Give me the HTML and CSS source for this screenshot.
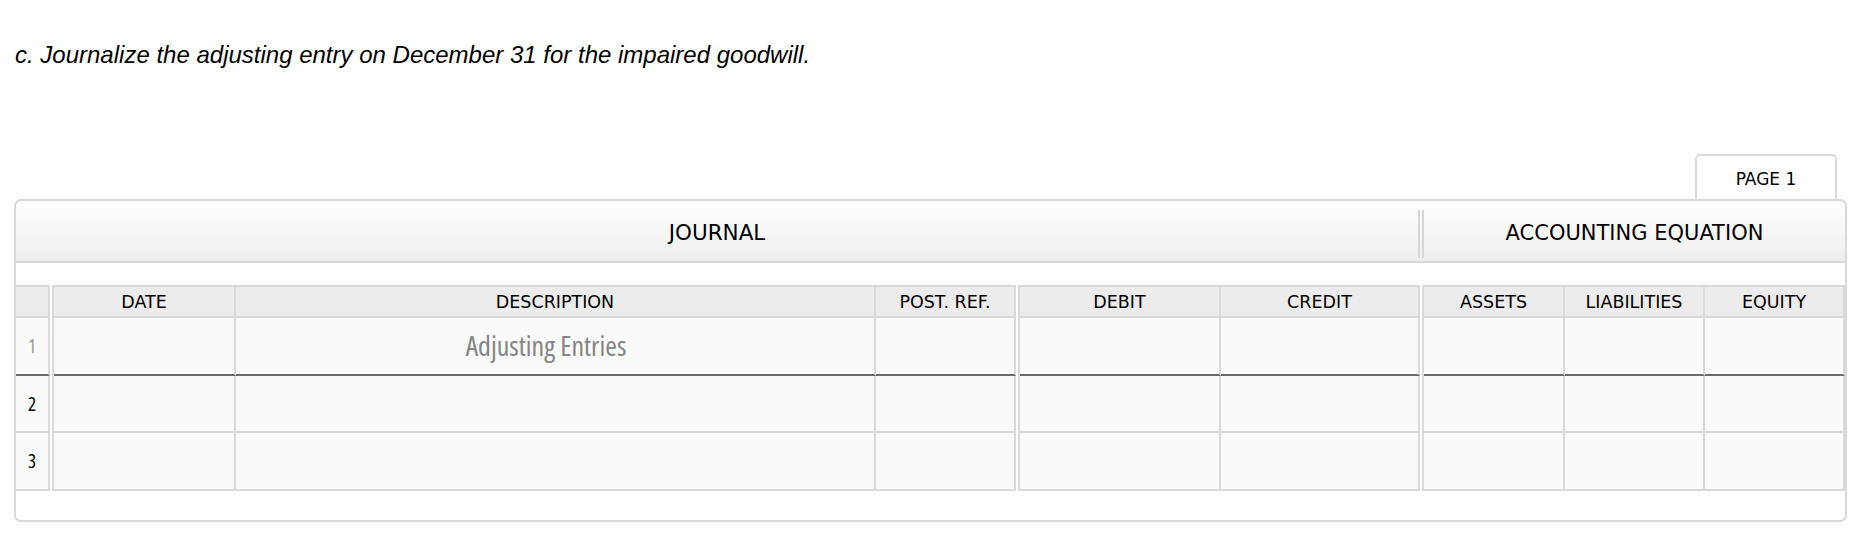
FILE: index.html
```html
<!DOCTYPE html>
<html>
<head>
<meta charset="utf-8">
<link rel="stylesheet" href="styles.css">
</head>
<body>
<p class="prompt">c. Journalize the adjusting entry on December 31 for the impaired goodwill.</p>
<div class="tabs"><div class="tab">PAGE 1</div></div>
<div class="sheet">
  <div class="band">
    <div class="band-journal">JOURNAL</div>
    <div class="band-divider"></div>
    <div class="band-equation">ACCOUNTING EQUATION</div>
  </div>
  <div class="tables">
    <div class="grp grp-num">
      <div class="hd"></div>
      <div class="cell num muted r1">1</div>
      <div class="cell num">2</div>
      <div class="cell num">3</div>
    </div>
    <div class="grp grp-main">
      <div class="hd">DATE</div><div class="hd">DESCRIPTION</div><div class="hd">POST. REF.</div>
      <div class="cell r1"></div><div class="cell r1 desc">Adjusting Entries</div><div class="cell r1"></div>
      <div class="cell"></div><div class="cell"></div><div class="cell"></div>
      <div class="cell"></div><div class="cell"></div><div class="cell"></div>
    </div>
    <div class="grp grp-amt">
      <div class="hd">DEBIT</div><div class="hd">CREDIT</div>
      <div class="cell r1"></div><div class="cell r1"></div>
      <div class="cell"></div><div class="cell"></div>
      <div class="cell"></div><div class="cell"></div>
    </div>
    <div class="grp grp-eq">
      <div class="hd">ASSETS</div><div class="hd">LIABILITIES</div><div class="hd">EQUITY</div>
      <div class="cell r1"></div><div class="cell r1"></div><div class="cell r1"></div>
      <div class="cell"></div><div class="cell"></div><div class="cell"></div>
      <div class="cell"></div><div class="cell"></div><div class="cell"></div>
    </div>
  </div>
</div>
</body>
</html>
```
FILE: styles.css
```css
html, body {
  margin: 0;
  padding: 0;
  background: #ffffff;
}
body {
  width: 1868px;
  font-family: "DejaVu Sans", sans-serif;
  color: #000;
}
.prompt {
  margin: 41px 0 0 15px;
  font-family: "Liberation Sans", Arial, sans-serif;
  font-style: italic;
  font-size: 24px;
  line-height: 27px;
  color: #000;
}
.tabs {
  display: flex;
  justify-content: flex-end;
  margin-top: 86px;
  padding-right: 31px;
}
.tab {
  width: 142px;
  height: 45px;
  box-sizing: border-box;
  border: 2px solid #d9d9d9;
  border-bottom: none;
  border-radius: 5px 5px 0 0;
  background: #fff;
  display: flex;
  align-items: center;
  justify-content: center;
  font-size: 17px;
  color: #000;
  padding-top: 2px;
}
.sheet {
  margin-left: 14px;
  width: 1833px;
  box-sizing: border-box;
  border: 2px solid #d9d9d9;
  border-radius: 7px;
  background: #fff;
  padding-bottom: 29px;
}
.band {
  display: flex;
  height: 62px;
  box-sizing: border-box;
  border-bottom: 2px solid #d9d9d9;
  background: linear-gradient(#ffffff, #eeeeee);
  border-radius: 6px 6px 0 0;
}
.band-journal,
.band-equation {
  display: flex;
  align-items: center;
  justify-content: center;
  font-size: 21px;
  padding-top: 3px;
  color: #000;
}
.band-journal { width: 1402px; font-size: 21.5px; }
.band-equation { flex: 1; }
.band-divider {
  width: 2px;
  height: 48px;
  margin-top: 9px;
  border-left: 2px solid #d6d6d6;
  border-right: 2px solid #d6d6d6;
}
.tables {
  display: flex;
  gap: 2px;
  margin-top: 22px;
}
.grp {
  display: grid;
  grid-template-rows: 31px 58px 57px 58px;
  border-top: 2px solid #d9d9d9;
  border-left: 2px solid #d9d9d9;
}
.grp-num {
  grid-template-columns: 34px;
  border-left: none;
}
.grp-main { grid-template-columns: 182px 640px 140px; }
.grp-amt { grid-template-columns: 201px 199px; }
.grp-eq { grid-template-columns: 141px 140px 140px; }
.hd,
.cell {
  box-sizing: border-box;
  border-right: 2px solid #d9d9d9;
  border-bottom: 2px solid #d9d9d9;
  display: flex;
  align-items: center;
  justify-content: center;
}
.hd {
  background: #ececec;
  font-size: 17.5px;
  color: #000;
}
.cell {
  background: #fafafa;
}
.cell.r1 {
  border-bottom-color: #6b6b6b;
}
.num {
  font-family: "Open Sans", "DejaVu Sans Condensed", sans-serif;
  font-stretch: 75%;
  font-size: 19px;
  color: #000;
}
.num.muted { color: #9a9a9a; }
.desc {
  font-family: "Open Sans", "DejaVu Sans Condensed", sans-serif;
  font-stretch: 75%;
  font-size: 28px;
  color: #858585;
  padding-right: 18px;
  padding-bottom: 3px;
}
```
